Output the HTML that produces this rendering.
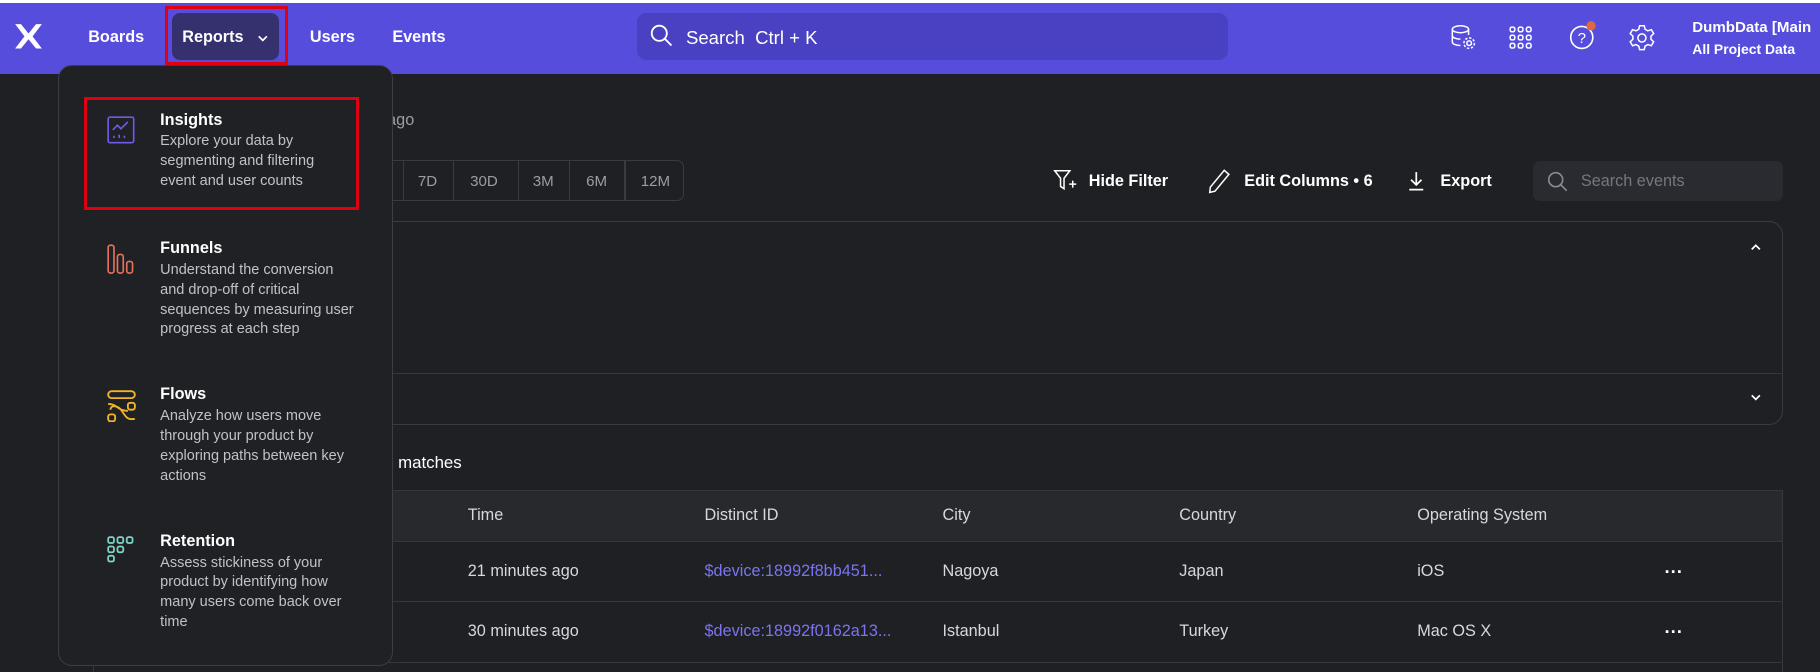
<!DOCTYPE html>
<html><head><meta charset="utf-8"><style>
*{box-sizing:border-box;margin:0;padding:0}
html,body{width:1820px;height:672px;overflow:hidden;background:#1f2024}
#root{zoom:1.1607;width:1568px;height:579px;position:relative;font-family:"Liberation Sans",sans-serif;color:#e8e8ea;background:#1f2024}
.a{position:absolute;white-space:nowrap}
.hdr{position:absolute;left:0;top:3px;width:1568px;height:61px;background:#564ddc}
.nav{font-size:14px;font-weight:bold;color:#fff;top:24px}
.g{color:#9c9ca2}
.dd{position:absolute;left:50px;top:56px;width:289px;height:518px;background:#202125;border:1px solid #3d3e44;border-radius:12px}
.t{font-size:14px;font-weight:bold;color:#fff}
.d{font-size:12.5px;color:#c2c2c6;line-height:17px}
.th{font-size:14px;color:#d8d8dc}
.td{font-size:14px;color:#d8d8dc}
.lnk{color:#7a74f0}
.hl{position:absolute;height:1px;background:#36373c}
</style></head><body><div id="root">
<div class="a" style="left:0;top:0;width:1568px;height:3px;background:#fff"></div>
<div class="hdr"></div>
<svg class="a" style="left:12px;top:20px" width="25" height="23" viewBox="0 0 25 23"><path d="M1 1h5l6.5 8 6.5-8h5l-8 10.5 8 10.5h-5l-6.5-8-6.5 8h-5l8-10.5z" fill="#fff"/></svg>
<div class="a nav" style="left:76px">Boards</div>
<div class="a" style="left:148px;top:11px;width:92px;height:41px;background:#35306e;border-radius:7px"></div>
<div class="a" style="left:142px;top:5px;width:106px;height:51px;border:3px solid #e0000f"></div>
<div class="a nav" style="left:157px">Reports</div>
<svg class="a" style="left:221px;top:29px" width="10" height="8"><path d="M1.5 2l3.5 3.5 3.5-3.5" stroke="#fff" stroke-width="1.5" fill="none"/></svg>
<div class="a nav" style="left:267px">Users</div>
<div class="a nav" style="left:338px">Events</div>
<div class="a" style="left:549px;top:11px;width:509px;height:41px;background:#4941c2;border-radius:8px"></div>
<svg class="a" style="left:560px;top:21px" width="20" height="20"><circle cx="8" cy="8" r="6.5" stroke="#fff" stroke-width="1.6" fill="none"/><path d="M13 13l5.5 5.5" stroke="#fff" stroke-width="1.6"/></svg>
<div class="a" style="left:591px;top:23px;font-size:16px;color:#fff">Search&nbsp; Ctrl + K</div>
<svg class="a" style="left:1249px;top:21px" width="24" height="24" fill="none" stroke="#fff" stroke-width="1.3"><ellipse cx="9" cy="4.5" rx="7" ry="3"/><path d="M2 4.5v11c0 1.6 3 3 7 3M16 4.5v5M2 10c0 1.6 3 3 7 3"/><circle cx="16.5" cy="16.5" r="2"/><circle cx="16.5" cy="16.5" r="4.5" stroke-dasharray="2 1.5"/></svg>
<svg class="a" style="left:1300px;top:22px" width="22" height="22" fill="none" stroke="#fff" stroke-width="1.3"><g><rect x="1" y="1" width="4" height="4" rx="1.5"/><rect x="8" y="1" width="4" height="4" rx="1.5"/><rect x="15" y="1" width="4" height="4" rx="1.5"/><rect x="1" y="8" width="4" height="4" rx="1.5"/><rect x="8" y="8" width="4" height="4" rx="1.5"/><rect x="15" y="8" width="4" height="4" rx="1.5"/><rect x="1" y="15" width="4" height="4" rx="1.5"/><rect x="8" y="15" width="4" height="4" rx="1.5"/><rect x="15" y="15" width="4" height="4" rx="1.5"/></g></svg>
<svg class="a" style="left:1352px;top:17px" width="26" height="28"><circle cx="11" cy="15" r="9.5" stroke="#fff" stroke-width="1.4" fill="none"/><text x="11" y="20" font-size="13" fill="#fff" text-anchor="middle" font-family="Liberation Sans">?</text><circle cx="19" cy="5" r="4" fill="#e0683f"/></svg>
<svg class="a" style="left:1403px;top:21px" width="24" height="24" fill="none" stroke="#fff" stroke-width="1.3"><path d="M10 1.5h4l.7 3 2.4 1.4 3-1 2 3.4-2.3 2.1v2.8l2.3 2.1-2 3.4-3-1-2.4 1.4-.7 3h-4l-.7-3-2.4-1.4-3 1-2-3.4 2.3-2.1v-2.8L1.9 8.3l2-3.4 3 1 2.4-1.4z"/><circle cx="12" cy="12" r="3.5"/></svg>
<div class="a" style="left:1458px;top:16px;font-size:13px;font-weight:bold;color:#fff">DumbData [Main</div>
<div class="a" style="left:1458px;top:35px;font-size:12px;font-weight:bold;color:#fff">All Project Data</div>

<div class="a g" style="left:290px;top:96px;font-size:14px">1 hour ago</div>
<div class="a" style="left:300px;top:138px;width:289px;height:35px;border:1px solid #3a3b40;border-radius:6px"></div>
<div class="a" style="left:347px;top:138px;width:1px;height:35px;background:#3a3b40"></div>
<div class="a" style="left:390px;top:138px;width:1px;height:35px;background:#3a3b40"></div>
<div class="a" style="left:446px;top:138px;width:1px;height:35px;background:#3a3b40"></div>
<div class="a" style="left:490px;top:138px;width:1px;height:35px;background:#3a3b40"></div>
<div class="a" style="left:538px;top:138px;width:1px;height:35px;background:#3a3b40"></div>
<div class="a g" style="left:360px;top:149px;font-size:13px">7D</div>
<div class="a g" style="left:405px;top:149px;font-size:13px">30D</div>
<div class="a g" style="left:459px;top:149px;font-size:13px">3M</div>
<div class="a g" style="left:505px;top:149px;font-size:13px">6M</div>
<div class="a g" style="left:552px;top:149px;font-size:13px">12M</div>
<svg class="a" style="left:907px;top:146px" width="22" height="20" fill="none" stroke="#fff" stroke-width="1.3"><path d="M1.5 1.5h13l-5 6.5v9l-3-2v-7z"/><path d="M14 13h6M17 10v6"/></svg>
<div class="a" style="left:938px;top:148px;font-size:14px;font-weight:bold;color:#fff">Hide Filter</div>
<svg class="a" style="left:1041px;top:145px" width="20" height="22" fill="none" stroke="#fff" stroke-width="1.3"><path d="M14 2l4 3.5L6 20l-4.5 1 .5-4.5z"/></svg>
<div class="a" style="left:1072px;top:148px;font-size:14px;font-weight:bold;color:#fff">Edit Columns • 6</div>
<svg class="a" style="left:1212px;top:147px" width="16" height="18" fill="none" stroke="#fff" stroke-width="1.5"><path d="M8 1v11M3.5 7.5L8 12l4.5-4.5M2 16h12"/></svg>
<div class="a" style="left:1241px;top:148px;font-size:14px;font-weight:bold;color:#fff">Export</div>
<div class="a" style="left:1321px;top:139px;width:215px;height:34px;background:#2a2b30;border-radius:6px"></div>
<svg class="a" style="left:1333px;top:147px" width="18" height="19"><circle cx="7.5" cy="7.5" r="6" stroke="#8a8a90" stroke-width="1.4" fill="none"/><path d="M12 12l5 5" stroke="#8a8a90" stroke-width="1.4"/></svg>
<div class="a" style="left:1362px;top:148px;font-size:14px;color:#76767c">Search events</div>

<div class="a" style="left:80px;top:190px;width:1456px;height:176px;border:1px solid #3a3b40;border-radius:12px"></div>
<div class="hl" style="left:80px;top:321px;width:1456px"></div>
<svg class="a" style="left:1508px;top:209px" width="10" height="8"><path d="M1.5 5.5L5 2l3.5 3.5" stroke="#fff" stroke-width="1.5" fill="none"/></svg>
<svg class="a" style="left:1508px;top:339px" width="10" height="8"><path d="M1.5 2L5 5.5 8.5 2" stroke="#fff" stroke-width="1.5" fill="none"/></svg>
<div class="a" style="left:343px;top:390px;font-size:14.5px;color:#fff">matches</div>

<div class="a" style="left:80px;top:422px;width:1456px;height:44px;background:#28292d;border-top:1px solid #36373c;border-right:1px solid #36373c;border-left:1px solid #36373c"></div>
<div class="hl" style="left:80px;top:466px;width:1456px"></div>
<div class="hl" style="left:80px;top:518px;width:1456px"></div>
<div class="hl" style="left:80px;top:570px;width:1456px"></div>
<div class="a" style="left:80px;top:466px;width:1px;height:113px;background:#36373c"></div>
<div class="a" style="left:1535px;top:466px;width:1px;height:113px;background:#36373c"></div>
<div class="a th" style="left:403px;top:436px">Time</div>
<div class="a th" style="left:607px;top:436px">Distinct ID</div>
<div class="a th" style="left:812px;top:436px">City</div>
<div class="a th" style="left:1016px;top:436px">Country</div>
<div class="a th" style="left:1221px;top:436px">Operating System</div>
<div class="a td" style="left:403px;top:484px">21 minutes ago</div>
<div class="a td lnk" style="left:607px;top:484px">$device:18992f8bb451...</div>
<div class="a td" style="left:812px;top:484px">Nagoya</div>
<div class="a td" style="left:1016px;top:484px">Japan</div>
<div class="a td" style="left:1221px;top:484px">iOS</div>
<div class="a" style="left:1434px;top:483px;font-size:16px;font-weight:bold;color:#fff">···</div>
<div class="a td" style="left:403px;top:536px">30 minutes ago</div>
<div class="a td lnk" style="left:607px;top:536px">$device:18992f0162a13...</div>
<div class="a td" style="left:812px;top:536px">Istanbul</div>
<div class="a td" style="left:1016px;top:536px">Turkey</div>
<div class="a td" style="left:1221px;top:536px">Mac OS X</div>
<div class="a" style="left:1434px;top:535px;font-size:16px;font-weight:bold;color:#fff">···</div>

<div class="dd"></div>
<div class="a" style="left:72px;top:84px;width:237px;height:97px;border:3px solid #e0000f"></div>
<svg class="a" style="left:92px;top:100px" width="26" height="26" fill="none" stroke="#6c5ce7" stroke-width="1.4"><rect x="1" y="1" width="22" height="22" rx="1.5"/><path d="M5 12l4-4 3 3 6-6M6 19v-2M10.5 19v-3M15 19v-2"/></svg>
<div class="a t" style="left:138px;top:96px">Insights</div>
<div class="a d" style="left:138px;top:114px">Explore your data by<br>segmenting and filtering<br>event and user counts</div>
<svg class="a" style="left:92px;top:210px" width="26" height="28" fill="none" stroke="#e6735a" stroke-width="1.4"><rect x="1" y="1" width="5" height="24" rx="2"/><rect x="9" y="9" width="5" height="16" rx="2"/><rect x="17" y="15" width="5" height="10" rx="2"/></svg>
<div class="a t" style="left:138px;top:206px">Funnels</div>
<div class="a d" style="left:138px;top:225px">Understand the conversion<br>and drop-off of critical<br>sequences by measuring user<br>progress at each step</div>
<svg class="a" style="left:92px;top:336px" width="26" height="28" fill="none" stroke="#f0b429" stroke-width="1.6"><rect x="1" y="1" width="23" height="6" rx="3"/><rect x="18" y="11" width="6" height="6" rx="2"/><rect x="1" y="21" width="6" height="6" rx="2"/><path d="M3 17c0-4 6-4 9 0s5 8 8 8h4M1 12c8 0 8 6 17 6"/></svg>
<div class="a t" style="left:138px;top:332px">Flows</div>
<div class="a d" style="left:138px;top:351px">Analyze how users move<br>through your product by<br>exploring paths between key<br>actions</div>
<svg class="a" style="left:92px;top:462px" width="26" height="28" fill="none" stroke="#7ed4c6" stroke-width="1.5"><rect x="1" y="1" width="5" height="5" rx="1.5"/><rect x="9" y="1" width="5" height="5" rx="1.5"/><rect x="17" y="1" width="5" height="5" rx="1.5"/><rect x="1" y="9" width="5" height="5" rx="1.5"/><rect x="9" y="9" width="5" height="5" rx="1.5"/><rect x="1" y="17" width="5" height="5" rx="1.5"/></svg>
<div class="a t" style="left:138px;top:458px">Retention</div>
<div class="a d" style="left:138px;top:477px">Assess stickiness of your<br>product by identifying how<br>many users come back over<br>time</div>
</div></body></html>
